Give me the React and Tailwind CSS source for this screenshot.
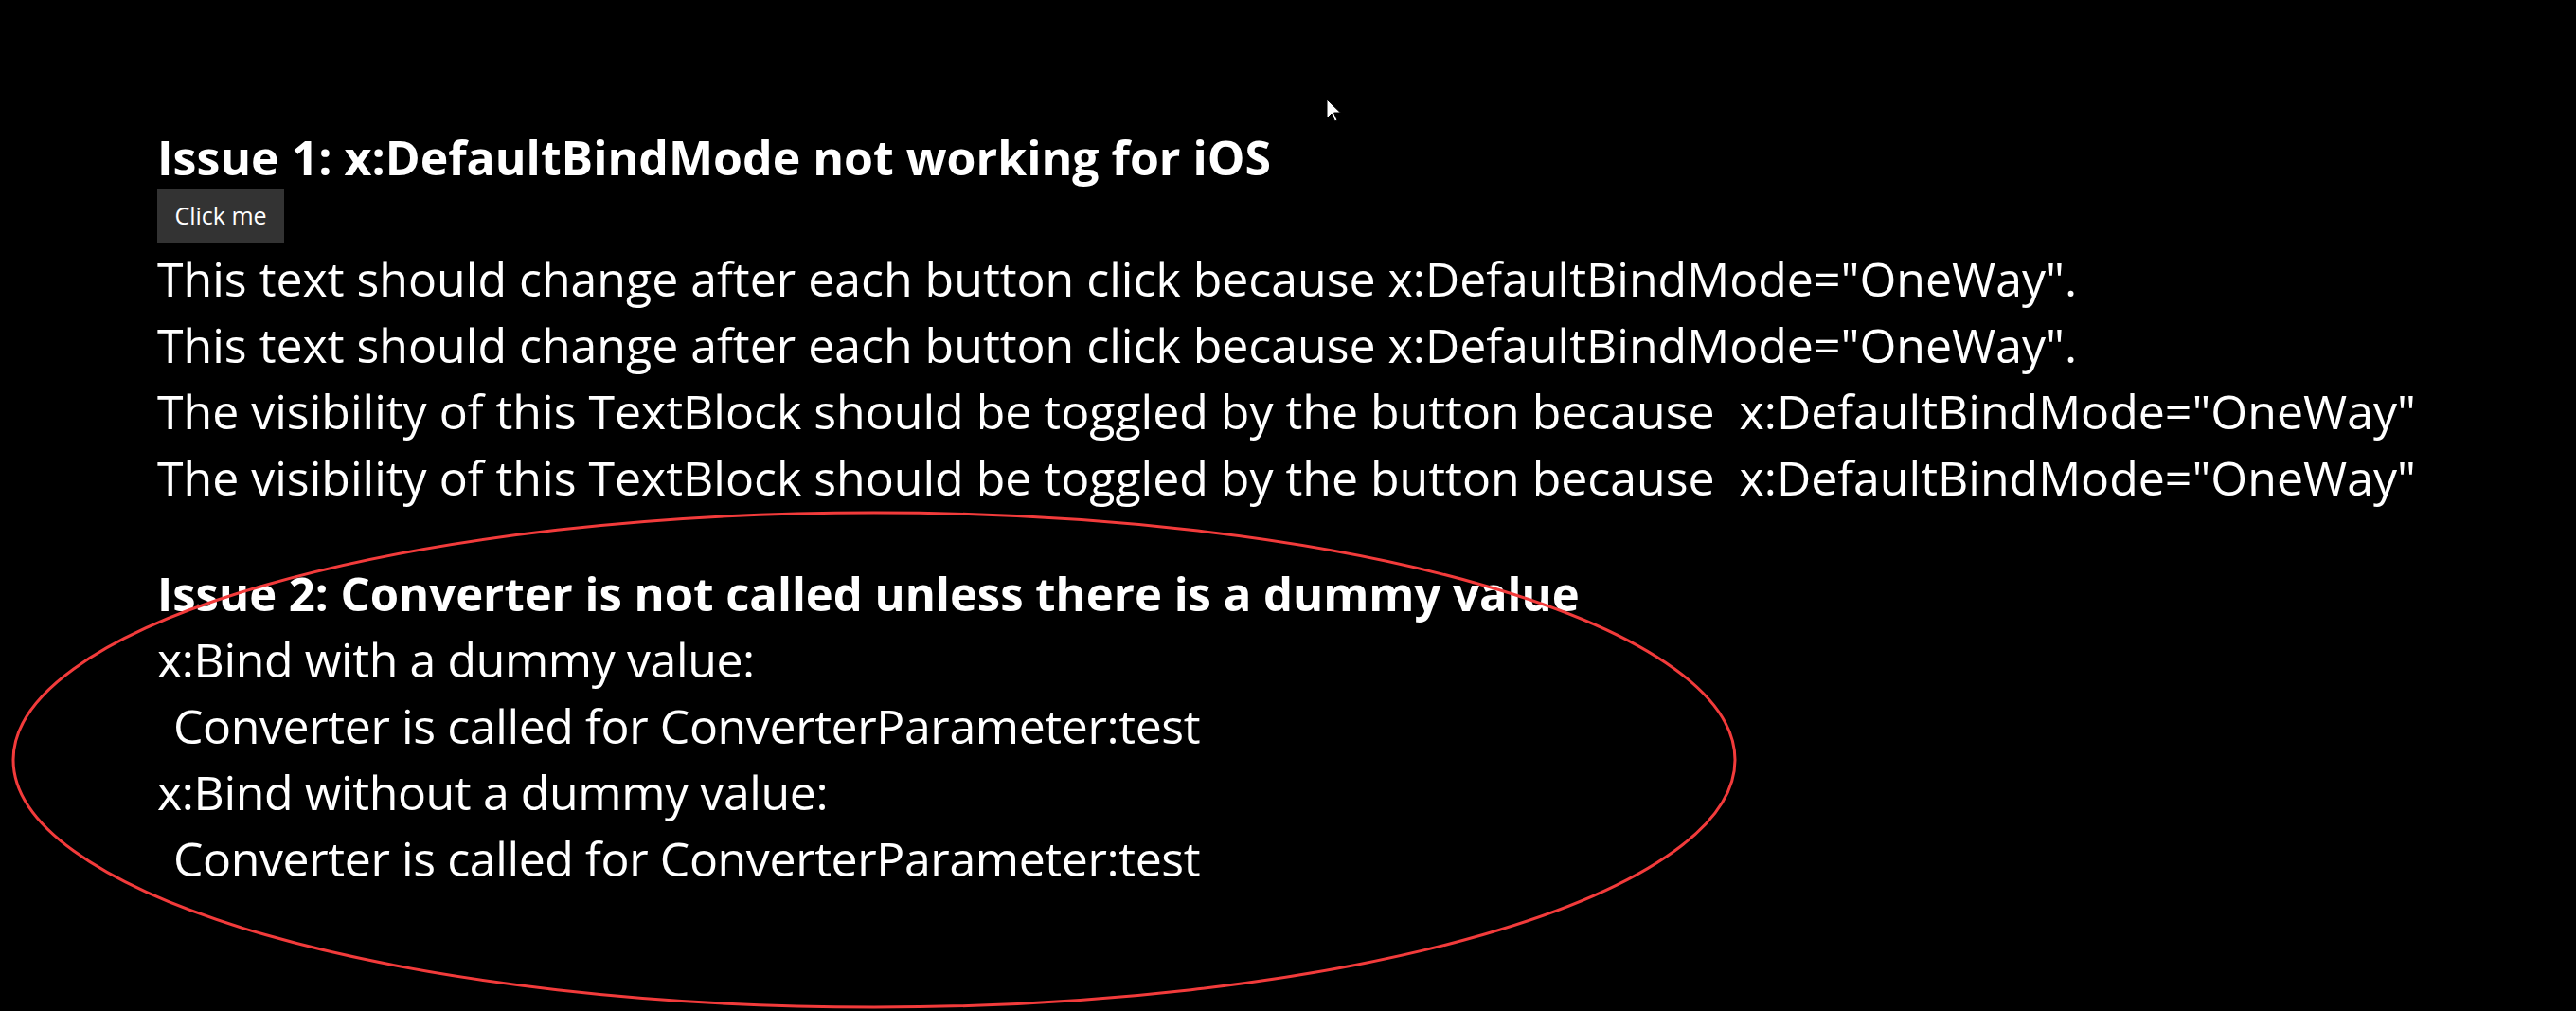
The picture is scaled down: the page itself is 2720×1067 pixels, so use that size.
const lines1 = [
  'This text should change after each button click because x:DefaultBindMode="OneWay".',
  'This text should change after each button click because x:DefaultBindMode="OneWay".',
  'The visibility of this TextBlock should be toggled by the button because  x:DefaultBindMode="OneWay"',
  'The visibility of this TextBlock should be toggled by the button because  x:DefaultBindMode="OneWay"',
];

const lines2 = [
  { text: "x:Bind with a dummy value:", indent: false },
  { text: "Converter is called for ConverterParameter:test", indent: true },
  { text: "x:Bind without a dummy value:", indent: false },
  { text: "Converter is called for ConverterParameter:test", indent: true },
];

function Cursor() {
  return (
    <svg
      className="absolute left-[1400px] top-[104px]"
      width="18"
      height="26"
      viewBox="0 0 18 26"
    >
      <path
        d="M1 1 L1 21 L6 16 L9.5 24 L12 23 L8.5 15 L15.5 15 Z"
        fill="#fff"
        stroke="#000"
        strokeWidth="1"
      />
    </svg>
  );
}

export default function App() {
  return (
    <div
      className="relative w-[2720px] h-[1067px] bg-black text-white overflow-hidden"
      style={{ fontFamily: '"Open Sans", "Noto Sans", sans-serif' }}
    >
      <div className="flex flex-col items-start pl-[166px] pt-[138px]">
        {/* Issue 1 */}
        <h1 className="text-[50px] leading-[56px] font-bold">
          Issue 1: x:DefaultBindMode not working for iOS
        </h1>
        <button className="mt-[5px] h-[57px] w-[134px] bg-[#333333] text-[25px] text-white">
          Click me
        </button>
        <div className="mt-[3px] flex flex-col">
          {lines1.map((t, i) => (
            <p key={i} className="text-[50px] leading-[70px] whitespace-pre">
              {t}
            </p>
          ))}
        </div>

        {/* Issue 2 */}
        <h2 className="mt-[59px] text-[49px] leading-[56px] font-bold">
          Issue 2: Converter is not called unless there is a dummy value
        </h2>
        <div className="mt-[7px] flex flex-col">
          {lines2.map((l, i) => (
            <p
              key={i}
              className={`text-[50px] leading-[70px] whitespace-pre tracking-[-0.4px] ${
                l.indent ? "pl-[17px]" : ""
              }`}
            >
              {l.text}
            </p>
          ))}
        </div>
      </div>

      {/* red annotation ellipse */}
      <svg
        className="absolute left-0 top-0 pointer-events-none"
        width="2720"
        height="1067"
      >
        <ellipse
          cx="923"
          cy="802"
          rx="909"
          ry="261"
          fill="none"
          stroke="#f23b3b"
          strokeWidth="3"
        />
      </svg>

      <Cursor />
    </div>
  );
}
